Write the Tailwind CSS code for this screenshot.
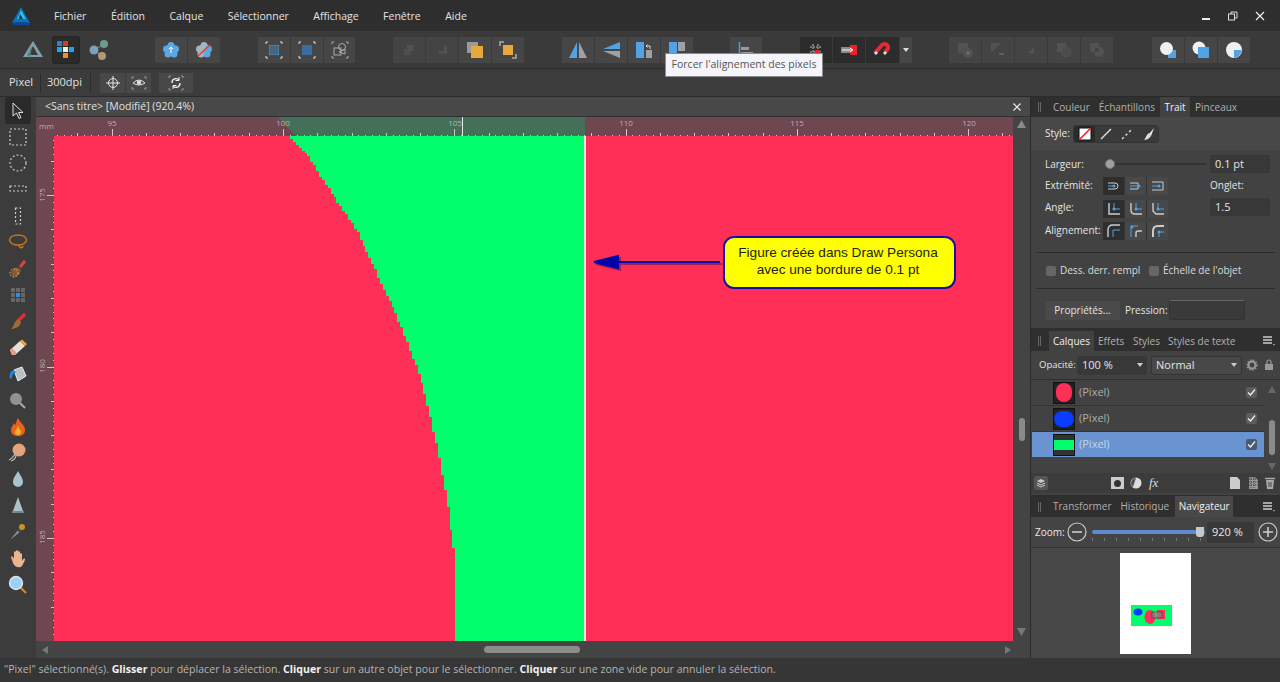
<!DOCTYPE html>
<html lang="fr">
<head>
<meta charset="UTF-8">
<title>Affinity Photo</title>
<script src="https://cdn.jsdelivr.net/npm/@tailwindcss/browser@4"></script>
</head>
<body class="bg-[#363636]">
<div class="relative w-[1280px] h-[682px] overflow-hidden flex flex-col font-['Open_Sans','Liberation_Sans',sans-serif] text-[11px] text-[#d8d8d8]">

  <!-- menu bar -->
  <div class="h-[31px] shrink-0 bg-[#2e2e2e] flex items-center">
    <div class="w-[54px] pl-[11px] shrink-0">
      <svg width="20" height="20" viewBox="0 0 20 20"><path d="M10 1 L19 17 H1Z" fill="#0f6fc0"/><path d="M10 4 L15 13 H6Z" fill="#29c4d8"/><path d="M3 16 H17 L19 19 H2Z" fill="#0b4a94"/><path d="M9 8 L12 13 H8Z" fill="#12325c"/></svg>
    </div>
    <div class="flex gap-[24.5px] pt-[2px] text-[10.5px] text-[#e4e4e4]">
      <span>Fichier</span><span>Édition</span><span>Calque</span><span>Sélectionner</span><span>Affichage</span><span>Fenêtre</span><span>Aide</span>
    </div>
    <div class="ml-auto flex items-center gap-[17px] pr-[15px]">
      <svg width="10" height="10" viewBox="0 0 10 10"><rect x="1" y="7" width="8" height="2" fill="#eee"/></svg>
      <svg width="10" height="10" viewBox="0 0 10 10" fill="none" stroke="#ddd"><rect x="0.5" y="3" width="6" height="6"/><path d="M3 3V1H9V7H7"/></svg>
      <svg width="10" height="10" viewBox="0 0 10 10" stroke="#eee" stroke-width="1.2"><path d="M1 1L9 9M9 1L1 9"/></svg>
    </div>
  </div>

  <!-- main toolbar -->
  <div class="h-[38px] shrink-0 bg-[#3a3a3a] border-b border-[#2a2a2a] flex items-center pl-[22px]">
    <svg width="22" height="20" viewBox="0 0 22 20"><path d="M11 1 L21 17 H1Z" fill="#7fa3a8"/><path d="M11 6 L16 15 H6Z" fill="#3a3a3a"/><path d="M10 6 L5 15 L8 18Z" fill="#5d8086"/></svg>
    <div class="ml-[8px] w-[28px] h-[28px] rounded-[3px] bg-[#2a2a2a] border border-[#242424] flex items-center justify-center">
      <svg width="20" height="20" viewBox="0 0 20 20"><rect x="1" y="1" width="5" height="5" fill="#2b7fd8"/><rect x="7" y="1" width="5" height="5" fill="#d93a20"/><rect x="1" y="7" width="5" height="5" fill="#1ea5ea"/><rect x="7" y="7" width="5" height="5" fill="#eee"/><rect x="13" y="7" width="5" height="5" fill="#1ea5ea"/><rect x="7" y="13" width="5" height="5" fill="#f09020"/></svg>
    </div>
    <svg class="ml-[8px]" width="22" height="22" viewBox="0 0 22 22"><path d="M6 11L16 5M6 11L14 17" stroke="#8a8a8a"/><circle cx="6" cy="11" r="4.5" fill="#7f9fb8"/><circle cx="16" cy="5" r="4" fill="#6f9a8c"/><circle cx="14" cy="17" r="4" fill="#b09878"/></svg>

    <div class="ml-[45px] flex gap-px">
      <div class="w-[32px] h-[26px] rounded-l-[2px] bg-[#464646] flex items-center justify-center">
        <svg width="18" height="18" viewBox="0 0 18 18"><circle cx="9" cy="9" r="6" fill="#5aa8e4"/><circle cx="9" cy="4.5" r="3.5" fill="#5aa8e4"/><circle cx="4.5" cy="8" r="3.5" fill="#5aa8e4"/><circle cx="13.5" cy="8" r="3.5" fill="#5aa8e4"/><circle cx="6" cy="13" r="3.5" fill="#5aa8e4"/><circle cx="12" cy="13" r="3.5" fill="#5aa8e4"/><path d="M9 6V12M7 8L9 6L11 8" stroke="#fff" fill="none"/></svg>
      </div>
      <div class="w-[32px] h-[26px] rounded-r-[2px] bg-[#464646] flex items-center justify-center">
        <svg width="18" height="18" viewBox="0 0 18 18"><circle cx="9" cy="9" r="6" fill="#a9b3bb"/><circle cx="9" cy="4.5" r="3.5" fill="#a9b3bb"/><circle cx="4.5" cy="8" r="3.5" fill="#a9b3bb"/><circle cx="13.5" cy="8" r="3.5" fill="#5aa8e4"/><circle cx="6" cy="13" r="3.5" fill="#a9b3bb"/><circle cx="12" cy="13" r="3.5" fill="#5aa8e4"/><path d="M3 15L15 4" stroke="#e83a30" stroke-width="1.5"/></svg>
      </div>
    </div>

    <div class="ml-[38px] flex gap-px">
      <div class="w-[32px] h-[26px] bg-[#464646] flex items-center justify-center">
        <svg width="18" height="18" viewBox="0 0 18 18"><path d="M1 3V1H3M15 1H17V3M17 15V17H15M3 17H1V15" stroke="#ddd" fill="none"/><rect x="4" y="4" width="10" height="10" fill="#4a9fe0"/><path d="M6 4V14M8 4V14M10 4V14M12 4V14M4 6H14M4 8H14M4 10H14M4 12H14" stroke="#464646" stroke-width=".8"/></svg>
      </div>
      <div class="w-[32px] h-[26px] bg-[#464646] flex items-center justify-center">
        <svg width="18" height="18" viewBox="0 0 18 18"><path d="M1 3V1H3M15 1H17V3M17 15V17H15M3 17H1V15" stroke="#ddd" fill="none"/><rect x="4" y="4" width="10" height="10" fill="#3a6ea0"/></svg>
      </div>
      <div class="w-[31px] h-[26px] bg-[#464646] flex items-center justify-center">
        <svg width="18" height="18" viewBox="0 0 18 18" fill="none" stroke="#aaa"><path d="M1 3V1H3M15 1H17V3M17 15V17H15M3 17H1V15"/><rect x="3" y="7" width="7" height="7"/><circle cx="11" cy="6" r="3.5"/><path d="M8 11L14 8V13Z"/></svg>
      </div>
    </div>

    <div class="ml-[38px] flex gap-px">
      <div class="w-[32px] h-[26px] bg-[#444] flex items-center justify-center">
        <svg width="16" height="16" viewBox="0 0 16 16"><rect x="6" y="3" width="6" height="6" fill="#525252"/><rect x="3" y="7" width="6" height="6" fill="#4e4e4e"/></svg>
      </div>
      <div class="w-[32px] h-[26px] bg-[#444] flex items-center justify-center">
        <svg width="16" height="16" viewBox="0 0 16 16"><path d="M10 4H13V12H5V9H10Z" fill="#525252"/></svg>
      </div>
      <div class="w-[32px] h-[26px] bg-[#464646] flex items-center justify-center">
        <svg width="18" height="18" viewBox="0 0 18 18"><rect x="1" y="1" width="11" height="11" fill="#9a9a9a"/><rect x="5" y="5" width="12" height="12" fill="#e8a93c"/></svg>
      </div>
      <div class="w-[32px] h-[26px] bg-[#464646] flex items-center justify-center">
        <svg width="18" height="18" viewBox="0 0 18 18"><path d="M1 5V1H5M13 17H17V13" stroke="#aaa" stroke-width="1.5" fill="none"/><rect x="4" y="4" width="10" height="10" fill="#e8a93c"/></svg>
      </div>
    </div>

    <div class="ml-[38px] flex gap-px">
      <div class="w-[32px] h-[26px] bg-[#464646] flex items-center justify-center">
        <svg width="20" height="18" viewBox="0 0 20 18"><path d="M9 1V17H1Z" fill="#4fa3e6"/><path d="M11 1V17H19Z" fill="#a0a0a0"/></svg>
      </div>
      <div class="w-[32px] h-[26px] bg-[#464646] flex items-center justify-center">
        <svg width="20" height="18" viewBox="0 0 20 18"><path d="M19 1V8H2Z" fill="#4fa3e6"/><path d="M19 17V10H2Z" fill="#a0a0a0"/></svg>
      </div>
      <div class="w-[32px] h-[26px] bg-[#464646] flex items-center justify-center">
        <svg width="18" height="18" viewBox="0 0 18 18"><rect x="1" y="1" width="8" height="16" fill="#4fa3e6"/><rect x="11" y="9" width="6" height="8" fill="#a0a0a0"/><path d="M11 5H15V8M11 5L12.5 3.5M11 5L12.5 6.5" stroke="#ddd" fill="none"/></svg>
      </div>
      <div class="w-[32px] h-[26px] bg-[#464646] flex items-center justify-center">
        <svg width="18" height="18" viewBox="0 0 18 18"><rect x="1" y="1" width="8" height="16" fill="#4fa3e6"/><rect x="10" y="1" width="7" height="9" fill="#a0a0a0"/></svg>
      </div>
    </div>

    <div class="ml-[37px] w-[32px] h-[26px] bg-[#464646] flex items-center justify-center">
      <svg width="18" height="18" viewBox="0 0 18 18"><path d="M2.5 1V17" stroke="#4fa3e6" stroke-width="1.4"/><rect x="4" y="6" width="8" height="3" fill="#999"/><rect x="4" y="11" width="12" height="3" fill="#999"/></svg>
    </div>

    <div class="ml-[38px] flex gap-px">
      <div class="w-[32px] h-[26px] bg-[#2c2c2c] flex items-center justify-center">
        <svg width="16" height="16" viewBox="0 0 16 16"><path d="M2 5H14M2 10H14M5 2V14M10 2V14" stroke="#777" stroke-width="2" stroke-dasharray="2 1"/><rect x="7" y="8" width="5" height="4" fill="#e8232a"/></svg>
      </div>
      <div class="w-[32px] h-[26px] bg-[#2c2c2c] flex items-center justify-center">
        <svg width="18" height="14" viewBox="0 0 18 14"><rect x="1" y="4" width="16" height="6" fill="#8a8a8a"/><rect x="10" y="2" width="7" height="10" fill="#e8232a"/><path d="M2 7H12M10 5L13 7L10 9" stroke="#fff" fill="none"/></svg>
      </div>
      <div class="w-[33px] h-[26px] bg-[#2c2c2c] flex items-center justify-center">
        <svg width="20" height="18" viewBox="0 0 20 18" fill="none"><path d="M3 14L10 6A3 3 0 0 1 15 11L13 13" stroke="#e52b3a" stroke-width="4" transform="translate(-1,-2)"/><path d="M2 11L4 13M11 11L13 13" stroke="#ddd" stroke-width="3"/></svg>
      </div>
      <div class="w-[12px] h-[26px] bg-[#464646] rounded-r-[2px] flex items-center justify-center">
        <svg width="6" height="4" viewBox="0 0 6 4"><path d="M0 0H6L3 4Z" fill="#ddd"/></svg>
      </div>
    </div>

    <div class="ml-[37px] flex gap-px">
      <div class="w-[32px] h-[26px] bg-[#444] flex items-center justify-center">
        <svg width="18" height="18" viewBox="0 0 18 18"><rect x="2" y="2" width="10" height="10" fill="#525252"/><circle cx="12" cy="12" r="5" fill="#525252"/><path d="M10 12H14M12 10V14" stroke="#777"/></svg>
      </div>
      <div class="w-[32px] h-[26px] bg-[#444] flex items-center justify-center">
        <svg width="18" height="18" viewBox="0 0 18 18"><path d="M2 2H12L2 12Z" fill="#525252"/><path d="M10 13H15" stroke="#777"/></svg>
      </div>
      <div class="w-[32px] h-[26px] bg-[#444] flex items-center justify-center">
        <svg width="18" height="18" viewBox="0 0 18 18"><path d="M12 6V12H6Z" fill="#525252"/></svg>
      </div>
      <div class="w-[32px] h-[26px] bg-[#444] flex items-center justify-center">
        <svg width="18" height="18" viewBox="0 0 18 18"><rect x="2" y="2" width="9" height="9" fill="#525252"/><circle cx="11" cy="11" r="5" fill="#4c4c4c" stroke="#525252"/></svg>
      </div>
      <div class="w-[32px] h-[26px] bg-[#444] flex items-center justify-center">
        <svg width="18" height="18" viewBox="0 0 18 18"><rect x="2" y="2" width="9" height="9" fill="#525252"/><circle cx="11" cy="11" r="5" fill="#525252"/><path d="M7 7H11V11H7Z" fill="#444"/></svg>
      </div>
    </div>

    <div class="ml-[39px] flex gap-px">
      <div class="w-[32px] h-[26px] bg-[#464646] flex items-center justify-center">
        <svg width="18" height="18" viewBox="0 0 18 18"><path d="M16 9V16H9Z" fill="#4fa3e6"/><rect x="9" y="9" width="8" height="8" fill="#4fa3e6"/><circle cx="7.5" cy="7.5" r="6.5" fill="#f0f0f0"/></svg>
      </div>
      <div class="w-[32px] h-[26px] bg-[#464646] flex items-center justify-center">
        <svg width="18" height="18" viewBox="0 0 18 18"><circle cx="7" cy="7" r="6.5" fill="#f0f0f0"/><rect x="6" y="6" width="11" height="11" fill="#4fa3e6"/></svg>
      </div>
      <div class="w-[32px] h-[26px] bg-[#464646] flex items-center justify-center">
        <svg width="18" height="18" viewBox="0 0 18 18"><circle cx="9" cy="9" r="8" fill="#f0f0f0"/><path d="M9 9H16.5A8 8 0 0 1 9 17Z" fill="#4fa3e6"/></svg>
      </div>
    </div>
  </div>

  <!-- context toolbar -->
  <div class="h-[27px] shrink-0 bg-[#3c3c3c] flex items-center text-[#e0e0e0]">
    <span class="ml-[9px] w-[31px]">Pixel</span>
    <span class="w-px h-[20px] bg-[#2c2c2c]"></span>
    <span class="ml-[6px] w-[43px]">300dpi</span>
    <span class="w-px h-[20px] bg-[#2c2c2c]"></span>
    <div class="ml-[9px] flex gap-px">
      <div class="w-[25px] h-[20px] bg-[#484848] flex items-center justify-center">
        <svg width="14" height="14" viewBox="0 0 14 14" fill="none" stroke="#e8e8e8"><circle cx="7" cy="7" r="4.5"/><path d="M7 0V14M0 7H14"/></svg>
      </div>
      <div class="w-[25px] h-[20px] bg-[#484848] flex items-center justify-center">
        <svg width="16" height="14" viewBox="0 0 16 14" fill="none"><path d="M1 3V1H3M13 1H15V3M15 11V13H13M3 13H1V11" stroke="#999"/><path d="M2 7Q8 1 14 7Q8 11 2 7Z" stroke="#ddd"/><circle cx="8" cy="6.5" r="2.2" fill="#ddd"/></svg>
      </div>
    </div>
    <div class="ml-[8px] w-[34px] h-[20px] bg-[#484848] flex items-center justify-center">
      <svg width="16" height="16" viewBox="0 0 16 16" fill="none"><path d="M1 3V1H3M13 1H15V3M15 13V15H13M3 15H1V13" stroke="#999"/><path d="M4 8A4 4 0 0 1 11 5M12 8A4 4 0 0 1 5 11" stroke="#eee" stroke-width="1.3"/><path d="M11 2V5.5H7.5M5 14V10.5H8.5" stroke="#eee"/></svg>
    </div>
  </div>

  <!-- workspace -->
  <div class="flex-1 min-h-0 flex border-t border-[#2a2a2a]">
    <!-- tools -->
    <div class="w-[36px] shrink-0 bg-[#3c3c3c] flex flex-col items-center">
      <div class="w-[26px] h-[27px] shrink-0 rounded-[3px] bg-[#2a2a2a] flex items-center justify-center">
        <svg width="16" height="18" viewBox="0 0 16 18"><path d="M3 1V14L6.5 11L9 16.5L11 15.5L8.5 10.5H13Z" fill="#333" stroke="#ddd"/></svg>
      </div>
      <div class="h-[26px] w-full shrink-0 flex items-center justify-center"><svg width="18" height="18" viewBox="0 0 18 18"><rect x="1" y="1" width="16" height="16" fill="none" stroke="#ccc" stroke-width="1.2" stroke-dasharray="2 2"/></svg></div>
      <div class="h-[26px] w-full shrink-0 flex items-center justify-center"><svg width="18" height="18" viewBox="0 0 18 18"><circle cx="9" cy="9" r="8" fill="none" stroke="#ccc" stroke-width="1.2" stroke-dasharray="2 2"/></svg></div>
      <div class="h-[26px] w-full shrink-0 flex items-center justify-center"><svg width="18" height="10" viewBox="0 0 18 10"><rect x="1" y="2" width="16" height="5" fill="none" stroke="#ccc" stroke-width="1.2" stroke-dasharray="2 2"/></svg></div>
      <div class="h-[27px] w-full shrink-0 flex items-center justify-center"><svg width="8" height="18" viewBox="0 0 8 18"><rect x="1.5" y="1" width="5" height="16" fill="none" stroke="#ccc" stroke-width="1.2" stroke-dasharray="2 2"/></svg></div>
      <div class="h-[26px] w-full shrink-0 flex items-center justify-center"><svg width="20" height="18" viewBox="0 0 20 18" fill="none" stroke="#c8761a" stroke-width="1.5"><ellipse cx="10" cy="7" rx="8.5" ry="5"/><path d="M11 12C11 15 14 16 15 13"/></svg></div>
      <div class="h-[27px] w-full shrink-0 flex items-center justify-center"><svg width="20" height="20" viewBox="0 0 20 20"><path d="M12 8L17 2" stroke="#e04040" stroke-width="3"/><ellipse cx="8" cy="13" rx="5" ry="4" fill="#8a5a2a" transform="rotate(-40 8 13)"/><circle cx="6" cy="14" r="4" fill="none" stroke="#ccc" stroke-dasharray="1.5 1.5"/></svg></div>
      <div class="h-[26px] w-full shrink-0 flex items-center justify-center"><svg width="16" height="16" viewBox="0 0 16 16"><rect x="1" y="1" width="4" height="4" fill="#666"/><rect x="6" y="1" width="4" height="4" fill="#666"/><rect x="11" y="1" width="4" height="4" fill="#666"/><rect x="1" y="6" width="4" height="4" fill="#666"/><rect x="6" y="6" width="4" height="4" fill="#2f8fe8"/><rect x="11" y="6" width="4" height="4" fill="#666"/><rect x="1" y="11" width="4" height="4" fill="#666"/><rect x="6" y="11" width="4" height="4" fill="#666"/><rect x="11" y="11" width="4" height="4" fill="#666"/></svg></div>
      <div class="h-[27px] w-full shrink-0 flex items-center justify-center"><svg width="20" height="20" viewBox="0 0 20 20"><path d="M10 9L17 2" stroke="#d8303a" stroke-width="3.5"/><path d="M10 7L13 10C12 15 7 17 3 17C6 15 6 9 10 7Z" fill="#a06a30"/></svg></div>
      <div class="h-[26px] w-full shrink-0 flex items-center justify-center"><svg width="20" height="20" viewBox="0 0 20 20"><path d="M2 12L12 3L17 8L7 17H4Z" fill="#e8e0d8"/><path d="M12 3L14 1.5L19 6L17 8Z" fill="#e8a840"/><path d="M2 12L4 10L9 15L7 17H4Z" fill="#e89a90"/></svg></div>
      <div class="h-[26px] w-full shrink-0 flex items-center justify-center"><svg width="20" height="20" viewBox="0 0 20 20"><path d="M6 6L14 3L18 12L10 17Z" fill="#b8c0c4" stroke="#eee"/><path d="M6 6C2 7 1 11 2 15L4 14C4 11 5 9 8 9Z" fill="#1e86e0"/></svg></div>
      <div class="h-[27px] w-full shrink-0 flex items-center justify-center"><svg width="18" height="18" viewBox="0 0 18 18"><circle cx="7" cy="7" r="6" fill="#8a9498"/><path d="M11 11L16 16" stroke="#aaa" stroke-width="2"/></svg></div>
      <div class="h-[26px] w-full shrink-0 flex items-center justify-center"><svg width="16" height="20" viewBox="0 0 16 20"><path d="M8 1C10 6 15 8 15 13C15 17 12 19 8 19C4 19 1 17 1 13C1 10 3 9 4 6C5 8 6 8 6 7C6 5 7 3 8 1Z" fill="#e8641a"/><path d="M8 9C9 12 11 13 11 15C11 17 9 18 8 18C6 18 5 17 5 15C5 13 7 12 8 9Z" fill="#f5b030"/></svg></div>
      <div class="h-[26px] w-full shrink-0 flex items-center justify-center"><svg width="20" height="20" viewBox="0 0 20 20"><circle cx="11" cy="7" r="6.5" fill="#e2a47c"/><path d="M7 11C5 14 4 16 1 17M8 12C8 15 6 17 3 18" stroke="#bbb" stroke-width="1.2" fill="none"/></svg></div>
      <div class="h-[26px] w-full shrink-0 flex items-center justify-center"><svg width="14" height="18" viewBox="0 0 14 18"><path d="M7 1C9 5 12 8 12 12A5 5 0 0 1 2 12C2 8 5 5 7 1Z" fill="#a8c4d2"/></svg></div>
      <div class="h-[26px] w-full shrink-0 flex items-center justify-center"><svg width="14" height="18" viewBox="0 0 14 18"><path d="M7 1L12 15H2Z" fill="#a8c4c8"/><path d="M1 15H13V17H1Z" fill="#6f8a90"/></svg></div>
      <div class="h-[27px] w-full shrink-0 flex items-center justify-center"><svg width="18" height="18" viewBox="0 0 18 18"><path d="M1 17L9 7L11 9Z" fill="#8a9098"/><path d="M10 4L14 8L11 10L8 7Z" fill="#444"/><circle cx="13" cy="4" r="3" fill="#c8922a"/></svg></div>
      <div class="h-[27px] w-full shrink-0 flex items-center justify-center"><svg width="18" height="20" viewBox="0 0 18 20"><path d="M4 14L2 8C2 7 3 7 4 8L5 10V3C5 2 7 2 7 3V8V2C7 1 9 1 9 2V8V3C9 2 11 2 11 3V9V5C11 4 13 4 13 5V12C14 10 15 9 16 10C16 12 14 15 13 17C11 19 6 19 4 14Z" fill="#eab48e"/></svg></div>
      <div class="h-[26px] w-full shrink-0 flex items-center justify-center"><svg width="20" height="20" viewBox="0 0 20 20"><path d="M12 12L18 18" stroke="#c8883a" stroke-width="2.2"/><circle cx="8" cy="8" r="6.5" fill="#9cd0f5" stroke="#d8e4ea" stroke-width="1.4"/></svg></div>
    </div>

    <!-- document -->
    <div class="w-[995px] shrink-0 flex flex-col border-r border-[#2a2a2a]">
      <div class="h-[20px] shrink-0 bg-[#484848] flex items-center justify-between pl-[9px] pr-[9px] text-[#e0e0e0] border-b border-[#2f2f2f]">
        <span class="text-[10.5px]">&lt;Sans titre&gt; [Modifié] (920.4%)</span>
        <svg width="8" height="8" viewBox="0 0 8 8" stroke="#eee" stroke-width="1.2"><path d="M0.5 0.5L7.5 7.5M7.5 0.5L0.5 7.5"/></svg>
      </div>
      <div class="flex-1 min-h-0 flex">
        <div class="relative w-[977px] shrink-0">
          <svg id="canvas" class="block" width="977" height="524" viewBox="36 117 977 524" shape-rendering="crispEdges">
            <rect x="36" y="117" width="977" height="524" fill="#6f4750"/>
            <path d="M278 117H585V136H296Z" fill="#44705a" shape-rendering="auto"/>
            <rect x="54" y="136" width="959" height="505" fill="#ff2f58"/>
            <path id="green" fill="#00fe6d" d=""/>
            <rect x="584" y="136" width="2" height="505" fill="#e8e8e8"/>
            <rect x="462" y="117" width="1" height="19" fill="#e8e8e8"/>
            <g id="ticks" fill="#cfc4c6"></g>
            <g id="labels" font-family="Open Sans" font-size="8" fill="#b8b0b0" shape-rendering="auto">
              <text x="39" y="129">mm</text>
              <text x="112" y="126" text-anchor="middle">95</text>
              <text x="283" y="126" text-anchor="middle">100</text>
              <text x="455" y="126" text-anchor="middle">105</text>
              <text x="626" y="126" text-anchor="middle">110</text>
              <text x="797" y="126" text-anchor="middle">115</text>
              <text x="969" y="126" text-anchor="middle">120</text>
              <text transform="translate(45 195) rotate(-90)" text-anchor="middle">175</text>
              <text transform="translate(45 366) rotate(-90)" text-anchor="middle">180</text>
              <text transform="translate(45 537) rotate(-90)" text-anchor="middle">185</text>
            </g>
            <g shape-rendering="auto">
              <path d="M720 262H616M618 256L594 262L618 268Z" transform="translate(2 2)" stroke="#7a1a50" stroke-width="2" fill="#7a1a50" opacity=".7"/>
              <path d="M720 262H616M618 256L594 262L618 268Z" stroke="#0000a8" stroke-width="2" fill="#0000a8"/>
            </g>
          </svg>
          <div class="absolute left-[687px] top-[119px] w-[233px] h-[53px] pb-[3px] pr-[3px] rounded-[11px] border-2 border-[#1010a8] bg-[#ffff00] flex items-center justify-center text-center text-[13.6px] leading-[17px] text-[#222] font-['Liberation_Sans',sans-serif]">Figure créée dans Draw Persona<br>avec une bordure de 0.1 pt</div>
        </div>
        <div class="w-[17px] shrink-0 bg-[#444] flex flex-col items-center">
          <svg class="mt-[3px]" width="9" height="8" viewBox="0 0 9 8"><path d="M4.5 0L9 8H0Z" fill="#8a8a8a"/></svg>
          <div class="mt-[290px] w-[6px] h-[23px] rounded-[3px] bg-[#8a8a8a]"></div>
          <svg class="mt-[187px]" width="9" height="8" viewBox="0 0 9 8"><path d="M4.5 8L9 0H0Z" fill="#777"/></svg>
        </div>
      </div>
      <div class="h-[17px] shrink-0 bg-[#444] flex items-center relative">
        <svg class="ml-[6px]" width="6" height="8" viewBox="0 0 6 8"><path d="M0 4L6 0V8Z" fill="#777"/></svg>
        <div class="ml-[436px] w-[96px] h-[7px] rounded-[4px] bg-[#8c8c8c]"></div>
        <svg class="ml-[425px]" width="6" height="8" viewBox="0 0 6 8"><path d="M6 4L0 0V8Z" fill="#777"/></svg>
      </div>
    </div>

    <!-- right panels -->
    <div class="w-[249px] shrink-0 flex flex-col bg-[#383838] text-[10px]">
      <!-- stroke panel -->
      <div class="h-[232px] shrink-0 bg-[#424242] flex flex-col border-b border-[#2d2d2d]">
        <div class="h-[20px] shrink-0 bg-[#2f2f2f] flex items-center text-[#b0b0b0]">
          <span class="ml-[7px] w-[3px] h-[10px] border-x border-[#666]"></span>
          <span class="ml-[12px]">Couleur</span>
          <span class="ml-[9px]">Échantillons</span>
          <span class="ml-[5px] w-[30px] h-full bg-[#424242] text-[#f0f0f0] flex items-center justify-center">Trait</span>
          <span class="ml-[5px]">Pinceaux</span>
        </div>
        <div class="h-[33px] shrink-0 bg-[#484848] flex items-center pl-[14px] gap-[4px] text-[#e8e8e8]">
          <span class="w-[24px]">Style:</span>
          <div class="flex h-[18px] border border-[#333] rounded-[3px] overflow-hidden">
            <span class="w-[21px] bg-[#2b2b2b] flex items-center justify-center"><svg width="14" height="14" viewBox="0 0 14 14"><rect x="1" y="1" width="12" height="12" fill="#fff" stroke="#111"/><path d="M1 13L13 1" stroke="#e8141c" stroke-width="1.5"/></svg></span>
            <span class="w-[21px] bg-[#3a3a3a] flex items-center justify-center"><svg width="14" height="14" viewBox="0 0 14 14"><path d="M2 12L12 2" stroke="#ddd" stroke-width="1.4"/></svg></span>
            <span class="w-[21px] bg-[#3a3a3a] flex items-center justify-center"><svg width="14" height="14" viewBox="0 0 14 14"><path d="M2 12L12 2" stroke="#ddd" stroke-width="1.4" stroke-dasharray="2.5 2.5"/></svg></span>
            <span class="w-[21px] bg-[#3a3a3a] flex items-center justify-center"><svg width="14" height="14" viewBox="0 0 14 14"><path d="M8 7L13 1L10 9Z" fill="#eee"/><path d="M8 6L10 9C8 12 5 13 3 13C5 11 5 8 8 6Z" fill="#ddd"/></svg></span>
          </div>
        </div>
        <div class="flex-1 text-[#e4e4e4]">
          <div class="h-[22px] mt-[3px] flex items-center pl-[14px]">
            <span class="w-[60px]">Largeur:</span>
            <span class="relative w-[101px] h-[2px] bg-[#333]"><span class="absolute left-0 top-[-4px] w-[10px] h-[10px] rounded-full bg-[#a0a0a0] border border-[#777]"></span></span>
            <span class="ml-[4px] w-[60px] h-[18px] bg-[#383838] rounded-[2px] pl-[5px] flex items-center text-[11px]">0.1 pt</span>
          </div>
          <div class="h-[22px] flex items-center pl-[14px]">
            <span class="w-[58px] mt-[-2px]">Extrémité:</span>
            <div class="flex gap-px h-[18px] bg-[#333] rounded-[2px]">
              <span class="w-[21px] bg-[#2e2e2e] flex items-center justify-center"><svg width="14" height="12" viewBox="0 0 14 12" fill="none"><path d="M1 3H8A3 3 0 0 1 8 9H1" stroke="#ccc"/><path d="M1 6H7" stroke="#4fa3e6"/><circle cx="7" cy="6" r="1.5" fill="#4fa3e6"/></svg></span>
              <span class="w-[21px] bg-[#484848] flex items-center justify-center"><svg width="14" height="12" viewBox="0 0 14 12" fill="none"><path d="M1 3H9V9H1" stroke="#ccc"/><path d="M1 6H10" stroke="#4fa3e6"/><circle cx="10" cy="6" r="1.5" fill="#4fa3e6"/></svg></span>
              <span class="w-[21px] bg-[#484848] flex items-center justify-center"><svg width="14" height="12" viewBox="0 0 14 12" fill="none"><path d="M1 2H12V10H1" stroke="#ccc"/><path d="M1 6H8" stroke="#4fa3e6"/><circle cx="8" cy="6" r="1.5" fill="#4fa3e6"/></svg></span>
            </div>
            <span class="ml-[42px] mt-[-2px]">Onglet:</span>
          </div>
          <div class="h-[23px] flex items-center pl-[14px]">
            <span class="w-[58px] mt-[-2px]">Angle:</span>
            <div class="flex gap-px h-[18px] bg-[#333] rounded-[2px]">
              <span class="w-[21px] bg-[#2e2e2e] flex items-center justify-center"><svg width="14" height="14" viewBox="0 0 14 14" fill="none"><path d="M2 1V12H13" stroke="#ccc" stroke-width="1.4"/><path d="M7 1V7H13" stroke="#4fa3e6"/><circle cx="7" cy="7" r="1.5" fill="#4fa3e6"/></svg></span>
              <span class="w-[21px] bg-[#484848] flex items-center justify-center"><svg width="14" height="14" viewBox="0 0 14 14" fill="none"><path d="M2 1V8Q2 12 6 12H13" stroke="#ccc" stroke-width="1.4"/><path d="M7 1V7H13" stroke="#4fa3e6"/><circle cx="7" cy="7" r="1.5" fill="#4fa3e6"/></svg></span>
              <span class="w-[21px] bg-[#484848] flex items-center justify-center"><svg width="14" height="14" viewBox="0 0 14 14" fill="none"><path d="M2 1V9L5 12H13" stroke="#ccc" stroke-width="1.4"/><path d="M7 1V7H13" stroke="#4fa3e6"/><circle cx="7" cy="7" r="1.5" fill="#4fa3e6"/></svg></span>
            </div>
            <span class="ml-[42px] w-[60px] h-[18px] mt-[-3px] bg-[#383838] rounded-[2px] pl-[5px] flex items-center text-[11px]">1.5</span>
          </div>
          <div class="h-[22px] flex items-center pl-[14px]">
            <span class="w-[58px] whitespace-nowrap mt-[-2px]">Alignement:</span>
            <div class="flex gap-px h-[18px] bg-[#333] rounded-[2px]">
              <span class="w-[21px] bg-[#2e2e2e] flex items-center justify-center"><svg width="14" height="14" viewBox="0 0 14 14" fill="none"><path d="M1 13V6Q1 1 6 1H13" stroke="#ccc" stroke-width="1.4"/><path d="M6 13V6H13" stroke="#4fa3e6"/></svg></span>
              <span class="w-[21px] bg-[#484848] flex items-center justify-center"><svg width="14" height="14" viewBox="0 0 14 14" fill="none"><path d="M7 13V9Q7 7 9 7H13" stroke="#ccc" stroke-width="1.4"/><path d="M2 13V2H9" stroke="#4fa3e6"/><circle cx="3" cy="3" r="1.5" fill="#4fa3e6"/></svg></span>
              <span class="w-[21px] bg-[#484848] flex items-center justify-center"><svg width="14" height="14" viewBox="0 0 14 14" fill="none"><path d="M2 13V7Q2 2 7 2H13" stroke="#ccc" stroke-width="2"/><path d="M8 13V8H13" stroke="#4fa3e6"/><circle cx="8" cy="8" r="1.5" fill="#4fa3e6"/></svg></span>
            </div>
          </div>
          <div class="mx-[5px] mt-[10px] h-px bg-[#2c2c2c]"></div>
          <div class="h-[35px] flex items-center pl-[15px] text-[#dcdcdc]">
            <span class="w-[10px] h-[10px] rounded-[2px] bg-[#666]"></span>
            <span class="ml-[4px] w-[85px] whitespace-nowrap">Dess. derr. rempl</span>
            <span class="ml-[4px] w-[10px] h-[10px] rounded-[2px] bg-[#666]"></span>
            <span class="ml-[4px]">Échelle de l'objet</span>
          </div>
          <div class="mx-[5px] h-px bg-[#2c2c2c]"></div>
          <div class="mt-[11px] flex items-center pl-[14px]">
            <span class="w-[75px] h-[19px] bg-[#4a4a4a] rounded-[2px] flex items-center justify-center">Propriétés...</span>
            <span class="ml-[5px] w-[44px]">Pression:</span>
            <span class="w-[76px] h-[20px] bg-[#3a3a3a] border border-[#333] border-t-[#666] rounded-[2px]"></span>
          </div>
        </div>
      </div>

      <!-- layers panel -->
      <div class="h-[167px] shrink-0 bg-[#424242] flex flex-col border-b border-[#2d2d2d]">
        <div class="h-[22px] shrink-0 bg-[#2f2f2f] flex items-end text-[#b0b0b0]">
          <span class="ml-[7px] mb-[5px] w-[3px] h-[10px] border-x border-[#666]"></span>
          <span class="ml-[8px] w-[45px] h-[20px] bg-[#424242] text-[#f0f0f0] flex items-center justify-center">Calques</span>
          <span class="ml-[4px] w-[25px] h-[20px] flex items-center">Effets</span>
          <span class="ml-[10px] w-[25px] h-[20px] flex items-center">Styles</span>
          <span class="ml-[10px] h-[20px] flex items-center">Styles de texte</span>
          <svg class="ml-auto mr-[5px] mb-[5px]" width="12" height="10" viewBox="0 0 12 10"><path d="M0 1H9M0 4H9M0 7H9" stroke="#ccc" stroke-width="1.4"/><path d="M10 8H12L11 9.5Z" fill="#ccc"/></svg>
        </div>
        <div class="h-[29px] shrink-0 flex items-center pl-[8px] text-[#e4e4e4] border-b border-[#2f2f2f]">
          <span class="w-[38px] text-[9.5px]">Opacité:</span>
          <span class="w-[70px] h-[19px] bg-[#383838] rounded-[2px] pl-[5px] flex items-center justify-between pr-[4px] text-[11px]">100 %<svg width="6" height="4" viewBox="0 0 6 4"><path d="M0 0H6L3 4Z" fill="#ccc"/></svg></span>
          <span class="ml-[4px] w-[91px] h-[19px] bg-[#484848] border border-[#333] rounded-[2px] pl-[4px] flex items-center justify-between pr-[4px] text-[11px]">Normal<svg width="6" height="4" viewBox="0 0 6 4"><path d="M0 0H6L3 4Z" fill="#ccc"/></svg></span>
          <svg class="ml-[4px]" width="12" height="12" viewBox="0 0 12 12"><circle cx="6" cy="6" r="3.5" fill="none" stroke="#999" stroke-width="2"/><circle cx="6" cy="6" r="5" fill="none" stroke="#999" stroke-width="1.4" stroke-dasharray="1.5 1.5"/></svg>
          <svg class="ml-[6px]" width="10" height="12" viewBox="0 0 10 12"><rect x="1" y="5" width="8" height="6" fill="#999"/><path d="M3 5V3A2 2 0 0 1 7 3V5" fill="none" stroke="#999" stroke-width="1.2"/></svg>
        </div>
        <div class="h-[93px] shrink-0 flex text-[11px]">
          <div class="w-[232px] shrink-0 ml-px flex flex-col">
            <div class="h-[26px] flex items-center pl-[21px] border-b border-[#333] text-[#aeaeae]">
              <span class="w-[22px] h-[22px] bg-[#222] border border-[#111] flex items-center justify-center"><span class="w-[16px] h-[19px] rounded-full bg-[#ff2f58]"></span></span>
              <span class="ml-[4px]">(Pixel)</span>
              <span class="ml-auto mr-[7px] w-[11px] h-[11px] rounded-[2px] bg-[#5c5c5c] flex items-center justify-center"><svg width="9" height="9" viewBox="0 0 9 9"><path d="M1 4.5L3.5 7L8 1.5" fill="none" stroke="#eee" stroke-width="1.4"/></svg></span>
            </div>
            <div class="h-[26px] flex items-center pl-[21px] border-b border-[#333] text-[#aeaeae]">
              <span class="w-[22px] h-[22px] bg-[#222] border border-[#111] flex items-center justify-center"><span class="w-[20px] h-[16px] rounded-full bg-[#0a3cff]"></span></span>
              <span class="ml-[4px]">(Pixel)</span>
              <span class="ml-auto mr-[7px] w-[11px] h-[11px] rounded-[2px] bg-[#5c5c5c] flex items-center justify-center"><svg width="9" height="9" viewBox="0 0 9 9"><path d="M1 4.5L3.5 7L8 1.5" fill="none" stroke="#eee" stroke-width="1.4"/></svg></span>
            </div>
            <div class="h-[25px] flex items-center pl-[21px] bg-[#6a93d2] text-[#c8d4e4]">
              <span class="w-[22px] h-[22px] bg-[#333] border border-[#111] flex items-center justify-center"><span class="w-[20px] h-[10px] bg-[#00fe6d]"></span></span>
              <span class="ml-[4px]">(Pixel)</span>
              <span class="ml-auto mr-[7px] w-[11px] h-[11px] rounded-[2px] bg-[#4a5a74] flex items-center justify-center"><svg width="9" height="9" viewBox="0 0 9 9"><path d="M1 4.5L3.5 7L8 1.5" fill="none" stroke="#eee" stroke-width="1.4"/></svg></span>
            </div>
          </div>
          <div class="flex-1 flex flex-col items-center pt-[6px]">
            <svg width="8" height="7" viewBox="0 0 8 7"><path d="M4 0L8 7H0Z" fill="#666"/></svg>
            <div class="mt-[27px] w-[6px] h-[35px] rounded-[3px] bg-[#8a8a8a]"></div>
            <svg class="mt-[8px]" width="8" height="7" viewBox="0 0 8 7"><path d="M4 7L8 0H0Z" fill="#666"/></svg>
          </div>
        </div>
        <div class="h-[20px] shrink-0 bg-[#3c3c3c] flex items-center pl-[3px] pr-[5px]">
          <span class="w-[14px] h-[14px] bg-[#555] rounded-[2px] flex items-center justify-center"><svg width="10" height="10" viewBox="0 0 10 10"><path d="M5 1L9 3L5 5L1 3Z" fill="#ccc"/><path d="M1 5L5 7L9 5M1 7L5 9L9 7" fill="none" stroke="#ccc"/></svg></span>
          <span class="ml-[63px] w-[13px] h-[12px] bg-[#ccc] flex items-center justify-center"><span class="w-[7px] h-[7px] rounded-full bg-[#333]"></span></span>
          <svg class="ml-[6px]" width="12" height="12" viewBox="0 0 12 12"><circle cx="6" cy="6" r="5.5" fill="#ddd"/><path d="M6 1A5 5 0 0 0 3 10Z" fill="#555"/></svg>
          <span class="ml-[7px] text-[13px] italic text-[#ddd] font-['Liberation_Serif',serif]">fx</span>
          <svg class="ml-auto" width="10" height="12" viewBox="0 0 10 12"><path d="M0 0H7L10 3V12H0Z" fill="#ccc"/></svg>
          <svg class="ml-[7px]" width="12" height="12" viewBox="0 0 12 12"><path d="M2 0H8L11 3V12H2Z" fill="#999"/><path d="M2 2H11M2 5H11M2 8H11M4 0V12M7 0V12" stroke="#3c3c3c" stroke-dasharray="1 1"/></svg>
          <svg class="ml-[6px]" width="10" height="12" viewBox="0 0 10 12"><path d="M1 3H9L8 12H2Z" fill="#aaa"/><path d="M0 1.5H10" stroke="#aaa" stroke-width="1.5"/><path d="M4 5V10M6 5V10" stroke="#444"/></svg>
        </div>
      </div>

      <!-- navigator panel -->
      <div class="flex-1 min-h-0 bg-[#484848] flex flex-col">
        <div class="h-[21px] shrink-0 bg-[#2f2f2f] flex items-center text-[#b0b0b0]">
          <span class="ml-[7px] w-[3px] h-[10px] border-x border-[#666]"></span>
          <span class="ml-[12px]">Transformer</span>
          <span class="ml-[9px]">Historique</span>
          <span class="ml-[6px] w-[58px] h-full bg-[#484848] text-[#f0f0f0] flex items-center justify-center">Navigateur</span>
          <svg class="ml-auto mr-[5px]" width="12" height="10" viewBox="0 0 12 10"><path d="M0 1H9M0 4H9M0 7H9" stroke="#ccc" stroke-width="1.4"/><path d="M10 8H12L11 9.5Z" fill="#ccc"/></svg>
        </div>
        <div class="h-[31px] shrink-0 flex items-center pl-[4px] bg-[#444] border-b border-[#333] text-[#e8e8e8]">
          <span class="w-[32px]">Zoom:</span>
          <svg width="20" height="20" viewBox="0 0 20 20" fill="none" stroke="#ccc" stroke-width="1.2"><circle cx="10" cy="10" r="9"/><path d="M5 10H15" stroke-width="1.6"/></svg>
          <span class="relative ml-[5px] w-[113px] h-[4px] bg-[#5d8cd0] rounded-[2px]"><span class="absolute right-[1px] top-[-3px] w-[8px] h-[10px] bg-[#c8c8c8] rounded-b-[3px]"></span><span class="absolute left-0 right-0 top-[8px] h-[3px] bg-[repeating-linear-gradient(90deg,#777_0,#777_1px,transparent_1px,transparent_12px)]"></span></span>
          <span class="ml-[2px] w-[47px] h-[21px] bg-[#383838] rounded-[2px] pl-[5px] flex items-center text-[11px]">920 %</span>
          <svg class="ml-[4px]" width="20" height="20" viewBox="0 0 20 20" fill="none" stroke="#ccc" stroke-width="1.2"><circle cx="10" cy="10" r="9"/><path d="M5 10H15M10 5V15" stroke-width="1.6"/></svg>
        </div>
        <div class="flex-1 min-h-0 flex justify-center pt-[5px]">
          <svg width="71" height="101" viewBox="0 0 71 101"><rect width="71" height="101" fill="#fff"/><rect x="11" y="52" width="41" height="21" fill="#00fe6d"/><ellipse cx="18" cy="59" rx="4.5" ry="3.5" fill="#0a3cff"/><ellipse cx="30" cy="64" rx="5.5" ry="7" fill="#ff2f58"/><rect x="37" y="57" width="8" height="9" fill="#ff2f58"/><rect x="32" y="59" width="10" height="6" fill="#888" fill-opacity=".6" stroke="#444" stroke-width=".7"/></svg>
        </div>
      </div>
    </div>
  </div>

  <!-- status bar -->
  <div class="h-[24px] shrink-0 bg-[#363636] flex items-center pl-[4px] text-[10.6px] text-[#b4b4b4] whitespace-pre">"Pixel" sélectionné(s). <b class="text-[#f0f0f0]">Glisser</b> pour déplacer la sélection. <b class="text-[#f0f0f0]">Cliquer</b> sur un autre objet pour le sélectionner. <b class="text-[#f0f0f0]">Cliquer</b> sur une zone vide pour annuler la sélection.</div>

  <!-- tooltip -->
  <div class="absolute left-[665px] top-[53px] w-[158px] h-[24px] bg-[#f4f4fa] border border-[#8a8a8a] flex items-center justify-center text-[#555] text-[10.5px]">Forcer l'alignement des pixels</div>
</div>

<script>
// ruler ticks
const ticks=document.getElementById('ticks');
let html='';
for(let i=-40;i<150;i++){
  const x=283+i*6.852;
  if(x<54||x>1013) continue;
  const len=i%25===0?7:i%5===0?3:1;
  html+=`<rect x="${Math.round(x)}" y="${136-len}" width="1" height="${len}"/>`;
}
for(let i=-15;i<65;i++){
  const y=195+i*6.86;
  if(y<136||y>641) continue;
  const len=i%25===0?7:i%5===0?3:1;
  html+=`<rect x="${54-len}" y="${Math.round(y)}" width="${len}" height="1"/>`;
}
ticks.innerHTML=html;

// stair-stepped edge between the red and green shapes, traced off the reference
const pts=[[291,136],[307,153],[323,178],[340,203],[357,229],[373,264],[390,299],[407,339],[423,384],[437,444],[447,499],[452,536],[454.4,551],[454.4,641]];
function edgeAt(y){
  for(let i=1;i<pts.length;i++){
    if(y<=pts[i][1]){
      const a=pts[i-1],b=pts[i];
      return a[0]+(b[0]-a[0])*(y-a[1])/(b[1]-a[1]);
    }
  }
  return 454.4;
}
const snap=v=>Math.round(v/2.9)*2.9;
let p='M586 136H'+snap(edgeAt(136));
for(let y=136;y<641;y+=2.9){
  p+='H'+snap(edgeAt(y))+'V'+Math.min(y+2.9,641);
}
p+='H586Z';
document.getElementById('green').setAttribute('d',p);
</script>
</body>
</html>
